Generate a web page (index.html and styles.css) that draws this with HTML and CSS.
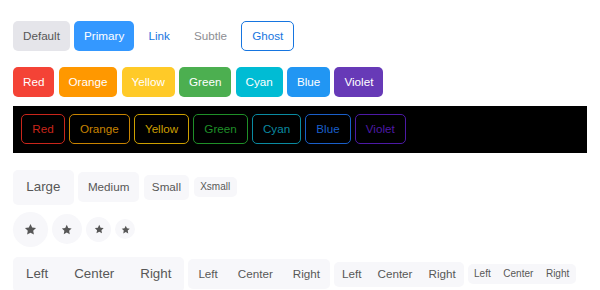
FILE: index.html
```html
<!DOCTYPE html>
<html lang="en">
<head>
<meta charset="utf-8">
<title>Buttons</title>
<link rel="stylesheet" href="styles.css">
</head>
<body>
<div class="page">
  <div class="toolbar row1">
    <button class="btn md default">Default</button>
    <button class="btn md primary">Primary</button>
    <button class="btn md link">Link</button>
    <button class="btn md subtle">Subtle</button>
    <button class="btn md ghost">Ghost</button>
  </div>

  <div class="toolbar row2">
    <button class="btn md solid c-red">Red</button>
    <button class="btn md solid c-orange">Orange</button>
    <button class="btn md solid c-yellow">Yellow</button>
    <button class="btn md solid c-green">Green</button>
    <button class="btn md solid c-cyan">Cyan</button>
    <button class="btn md solid c-blue">Blue</button>
    <button class="btn md solid c-violet">Violet</button>
  </div>

  <div class="dark">
    <div class="toolbar">
      <button class="btn md ghost d-red">Red</button>
      <button class="btn md ghost d-orange">Orange</button>
      <button class="btn md ghost d-yellow">Yellow</button>
      <button class="btn md ghost d-green">Green</button>
      <button class="btn md ghost d-cyan">Cyan</button>
      <button class="btn md ghost d-blue">Blue</button>
      <button class="btn md ghost d-violet">Violet</button>
    </div>
  </div>

  <div class="toolbar row4">
    <button class="btn lg light">Large</button>
    <button class="btn md light">Medium</button>
    <button class="btn sm light">Small</button>
    <button class="btn xs light">Xsmall</button>
  </div>

  <div class="toolbar row5">
    <button class="btn icon lg light" aria-label="star"><svg class="star s-lg" viewBox="0 0 24 24"><path d="M12 1.8l3.1 6.5 7.1.9-5.2 4.9 1.3 7.1L12 17.8l-6.3 3.4 1.3-7.1-5.2-4.9 7.1-.9z"/></svg></button>
    <button class="btn icon md light" aria-label="star"><svg class="star s-md" viewBox="0 0 24 24"><path d="M12 1.8l3.1 6.5 7.1.9-5.2 4.9 1.3 7.1L12 17.8l-6.3 3.4 1.3-7.1-5.2-4.9 7.1-.9z"/></svg></button>
    <button class="btn icon sm light" aria-label="star"><svg class="star s-sm" viewBox="0 0 24 24"><path d="M12 1.8l3.1 6.5 7.1.9-5.2 4.9 1.3 7.1L12 17.8l-6.3 3.4 1.3-7.1-5.2-4.9 7.1-.9z"/></svg></button>
    <button class="btn icon xs light" aria-label="star"><svg class="star s-xs" viewBox="0 0 24 24"><path d="M12 1.8l3.1 6.5 7.1.9-5.2 4.9 1.3 7.1L12 17.8l-6.3 3.4 1.3-7.1-5.2-4.9 7.1-.9z"/></svg></button>
  </div>

  <div class="toolbar row6">
    <div class="group">
      <button class="btn lg light">Left</button>
      <button class="btn lg light">Center</button>
      <button class="btn lg light">Right</button>
    </div>
    <div class="group">
      <button class="btn md light">Left</button>
      <button class="btn md light">Center</button>
      <button class="btn md light">Right</button>
    </div>
    <div class="group">
      <button class="btn sm light">Left</button>
      <button class="btn sm light">Center</button>
      <button class="btn sm light">Right</button>
    </div>
    <div class="group">
      <button class="btn xs light">Left</button>
      <button class="btn xs light">Center</button>
      <button class="btn xs light">Right</button>
    </div>
  </div>
</div>
</body>
</html>
```

FILE: styles.css
```css
html, body {
  margin: 0;
  padding: 0;
  background: #ffffff;
  font-family: "Liberation Sans", Arial, Helvetica, sans-serif;
}

.page {
  padding: 21px 13px 0;
}

.toolbar {
  display: flex;
  align-items: center;
  gap: 4.17px;
}

.btn {
  margin: 0;
  border: none;
  font-family: inherit;
  white-space: nowrap;
  border-radius: 5px;
  cursor: pointer;
  background: transparent;
  color: #575757;
  display: inline-flex;
  align-items: center;
  justify-content: center;
}

.btn.lg {
  font-size: 13.33px;
  line-height: 18.33px;
  padding: 8.33px 13.33px;
}
.btn.md {
  font-size: 11.67px;
  line-height: 16.67px;
  padding: 6.67px 10px;
}
.btn.sm {
  font-size: 11.67px;
  line-height: 16.67px;
  padding: 4.17px 8.33px;
}
.btn.xs {
  font-size: 10px;
  line-height: 16.67px;
  padding: 1.67px 6.67px;
}

.default { background: #e5e5ea; color: #575757; }
.primary { background: #3498ff; color: #ffffff; }
.link { color: #1675e0; }
.subtle { color: #8e8e93; }

.btn.ghost {
  border: 1px solid #1675e0;
  color: #1675e0;
  background: transparent;
  padding: 5.67px 10px;
}

.solid { color: #ffffff; }
.c-red { background: #f44336; }
.c-orange { background: #ff9800; }
.c-yellow { background: #ffca28; }
.c-green { background: #4caf50; }
.c-cyan { background: #00bcd4; }
.c-blue { background: #2196f3; }
.c-violet { background: #673ab7; }

.row2 { margin-top: 16px; }

.dark {
  margin-top: 9px;
  background: #000000;
  padding: 8.33px;
}

.btn.ghost.d-red { color: #c9261b; border-color: #c9261b; }
.btn.ghost.d-orange { color: #c98400; border-color: #c98400; }
.btn.ghost.d-yellow { color: #cc9f00; border-color: #cc9f00; }
.btn.ghost.d-green { color: #1f8f28; border-color: #1f8f28; }
.btn.ghost.d-cyan { color: #0a8ba2; border-color: #0a8ba2; }
.btn.ghost.d-blue { color: #1a5fc9; border-color: #1a5fc9; }
.btn.ghost.d-violet { color: #4d1aa6; border-color: #4d1aa6; }

.light { background: #f7f7fa; color: #575757; }

.row4 { margin-top: 17.3px; }
.row5 { margin-top: 7px; }
.row6 { margin-top: 10px; gap: 4px; }

.btn.icon {
  padding: 0;
  border-radius: 50%;
}
.btn.icon.lg { width: 35px; height: 35px; }
.btn.icon.md { width: 30px; height: 30px; }
.btn.icon.sm { width: 25px; height: 25px; }
.btn.icon.xs { width: 20px; height: 20px; }

.star { fill: #575757; display: block; }
.s-lg { width: 13px; height: 13px; }
.s-md { width: 11.5px; height: 11.5px; }
.s-sm { width: 10.5px; height: 10.5px; }
.s-xs { width: 9.5px; height: 9.5px; }

.group {
  display: flex;
}
.group .btn {
  border-radius: 0;
}
.group .btn.lg { padding-left: 13px; padding-right: 13px; }
.group .btn.sm { padding-left: 8px; padding-right: 8px; }
.group .btn.xs { padding-left: 6.3px; padding-right: 6.3px; }
.group .btn:first-child {
  border-radius: 5px 0 0 5px;
}
.group .btn:last-child {
  border-radius: 0 5px 5px 0;
}
```
